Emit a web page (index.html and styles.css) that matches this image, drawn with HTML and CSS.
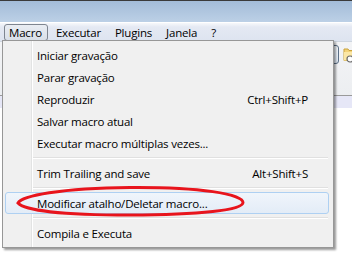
FILE: index.html
```html
<!DOCTYPE html>
<html lang="pt">
<head>
<meta charset="utf-8">
<link rel="stylesheet" href="styles.css">
</head>
<body>
<div class="window">
  <div class="titlebar"></div>
  <div class="menubar">
    <span class="mb-item active">Macro</span>
    <span class="mb-item">Executar</span>
    <span class="mb-item">Plugins</span>
    <span class="mb-item">Janela</span>
    <span class="mb-item">?</span>
  </div>
  <div class="toolbar">
    <div class="tb-btn"></div>
    <svg class="folder" width="12" height="18" viewBox="0 0 12 18">
      <path d="M1 3 h4 l1 1.5 h6 v10 h-11 z" fill="#f3d37a" stroke="#c9a23b" stroke-width="1"/>
      <path d="M1 6 h11 v8.5 h-11 z" fill="#fbe7a6"/>
      <circle cx="7" cy="13" r="3" fill="#ffffff" stroke="#6b6b6b" stroke-width="1.2"/>
    </svg>
  </div>
  <div class="tabline"></div>
  <div class="editor"></div>

  <div class="menu">
    <div class="mi"><span>Iniciar gravação</span></div>
    <div class="mi"><span>Parar gravação</span></div>
    <div class="mi"><span>Reproduzir</span><span class="sc">Ctrl+Shift+P</span></div>
    <div class="mi"><span>Salvar macro atual</span></div>
    <div class="mi"><span>Executar macro múltiplas vezes...</span></div>
    <div class="sep"></div>
    <div class="mi"><span>Trim Trailing and save</span><span class="sc">Alt+Shift+S</span></div>
    <div class="sep"></div>
    <div class="mi hl"><span>Modificar atalho/Deletar macro...</span></div>
    <div class="sep"></div>
    <div class="mi"><span>Compila e Executa</span></div>
  </div>

  <svg class="circle" width="352" height="271" viewBox="0 0 352 271">
    <path d="M18 203 C 22 196, 60 188, 130 187.5 C 200 187, 243 194, 243 202.5 C 243 210, 200 215, 130 215 C 60 215, 24 210, 18 203 Z" fill="none" stroke="#e8141c" stroke-width="3"/>
  </svg>
</div>
</body>
</html>
```
FILE: styles.css
```css
html, body {
  margin: 0;
  padding: 0;
}
body {
  font-family: "Open Sans", "Noto Sans", sans-serif;
  font-size: 11.5px;
  letter-spacing: -0.2px;
  color: #000;
}
.window {
  position: relative;
  width: 352px;
  height: 271px;
  overflow: hidden;
  background: #ffffff;
  display: flex;
  flex-direction: column;
}
.titlebar {
  height: 21px;
  border-top: 1px solid #3a3a3a;
  background: linear-gradient(#a3bcd8, #bcd0e6);
  flex: none;
}
.menubar {
  flex: none;
  display: flex;
  align-items: stretch;
  gap: 3px;
  padding-left: 4px;
  background: linear-gradient(#f6f8fb 0, #e4e9f3 4px, #dde4f0 100%);
  border-top: 1px solid #ffffff;
  box-sizing: border-box;
  height: 19px;
}
.mb-item {
  display: flex;
  align-items: center;
  padding: 0 5px 0 4px;
  line-height: 16px;
  border: 1px solid transparent;
  border-radius: 3px;
  margin-top: 1px;
}
.mb-item.active {
  border-color: #7e8590;
  background: linear-gradient(#e9edf3, #d9dfe8);
}
.toolbar {
  height: 54px;
  flex: none;
  background: linear-gradient(#f3f4f6, #eceef1);
  border-top: 1px solid #cfd6df;
  display: flex;
  justify-content: flex-end;
  align-items: flex-start;
  padding-top: 3px;
  box-sizing: border-box;
  gap: 4px;
}
.tb-btn {
  width: 20px;
  height: 19px;
  box-sizing: border-box;
  border: 1px solid #5b6f86;
  border-radius: 3px;
  background: linear-gradient(#f4f8fc, #dfe9f4);
}
.folder {
  margin-top: 1px;
  margin-right: -3px;
}
.tabline {
  height: 13px;
  flex: none;
  border-top: 1px solid #9a9a9a;
  background: #e6e7f7;
  box-sizing: border-box;
}
.editor {
  flex: 1;
  background: #ffffff;
}
.menu {
  position: absolute;
  left: 2px;
  top: 40px;
  width: 332px;
  box-sizing: border-box;
  border: 1px solid #979797;
  background: #f0f0f0;
  padding: 3px 2px;
  box-shadow: 2px 2px 2px rgba(0,0,0,0.4);
  background-image: linear-gradient(to right, transparent 28px, #e2e3e3 28px, #e2e3e3 29px, #ffffff 29px, #ffffff 30px, transparent 30px);
  background-repeat: no-repeat;
}
.mi {
  height: 22px;
  display: flex;
  align-items: center;
  justify-content: space-between;
  padding: 0 20px 0 31px;
  box-sizing: border-box;
  border: 1px solid transparent;
  border-radius: 3px;
  margin-right: 2px;
  white-space: nowrap;
}
.mi.hl {
  border-color: #aed0f2;
  background: linear-gradient(#f0f5fb, #e3ecf7);
}
.sc {
  margin-left: 20px;
}
.sep {
  height: 8px;
  margin: 0 3px 0 28px;
  background: linear-gradient(transparent 3px, #e0e0e0 3px, #e0e0e0 4px, #ffffff 4px, #ffffff 5px, transparent 5px);
}
.circle {
  position: absolute;
  left: 0;
  top: 0;
  pointer-events: none;
}
```
